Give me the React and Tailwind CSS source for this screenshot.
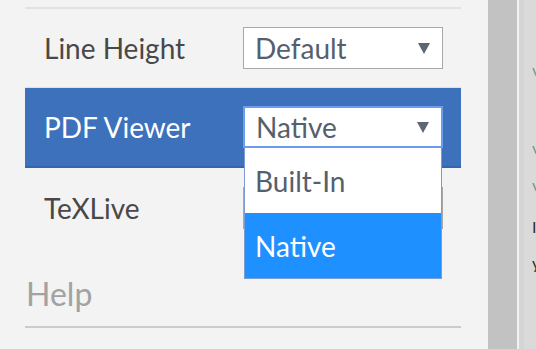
import { useState } from "react";

function Arrow() {
  return (
    <svg width="12" height="11" viewBox="0 0 12 11" className="shrink-0">
      <path d="M0 0 H12 L6 11 Z" fill="#5d6673" />
    </svg>
  );
}

function Select({ value, focused }) {
  return (
    <div
      className={`w-[200px] h-[42px] bg-white flex items-center justify-between pl-[11px] pr-[12px] ${
        focused ? "border-2 border-[#6b9cee] pl-[10px] pr-[11px]" : "border border-[#a8a8a8]"
      }`}
    >
      <span className="text-[28px] leading-none text-[#56606d]">{value}</span>
      <Arrow />
    </div>
  );
}

export default function App() {
  const [current] = useState("Native");
  const options = ["Built-In", "Native"];

  return (
    <div className="w-[536px] h-[349px] flex overflow-hidden font-['Lato','Liberation_Sans',sans-serif]">
      {/* settings panel */}
      <div className="relative w-[488px] bg-[#f3f3f3] pl-[25px] pr-[27px]">
        <div className="mt-[7px] h-[2px] bg-[#e2e2e2]" />

        <div className="h-[78px] flex items-center pl-[19px]">
          <span className="w-[199px] text-[28px] text-[#484848]">Line Height</span>
          <Select value="Default" />
        </div>

        <div className="h-[81px] border-t border-[#e0e0e0] border-b-2 border-b-[#3765ab] bg-[#3e71bb] flex items-center pl-[19px]">
          <span className="w-[199px] text-[28px] text-white">PDF Viewer</span>
          <Select value={current} focused />
        </div>

        <div className="h-[80px] flex items-center pl-[19px]">
          <span className="w-[199px] text-[28px] text-[#484848]">TeXLive</span>
          {/* value hidden behind the open list */}
          <Select value="" />
        </div>

        <div className="h-[78px] flex items-center pl-[1px] pt-[14px]">
          <span className="text-[32px] text-[#a2a2a2]">Help</span>
        </div>

        <div className="h-[2px] bg-[#cccccc]" />

        {/* open dropdown */}
        <div className="absolute left-[244px] top-[148px] w-[198px] border border-t-0 border-[#7c9bd3] bg-white">
          {options.map((o) => (
            <div
              key={o}
              className={`h-[65px] flex items-center pl-[10px] text-[28px] ${
                o === current ? "bg-[#1e90ff] text-white" : "text-[#56606d]"
              }`}
            >
              {o}
            </div>
          ))}
        </div>
      </div>

      {/* scrollbar track */}
      <div className="w-[29px] bg-[#c2c2c2]" />
      <div className="w-[2px] bg-[#f2f2f2]" />
      <div className="w-[5px] bg-[#d5d5d5]" />

      {/* clipped neighbour pane */}
      <div className="flex-1 bg-[#dadada] overflow-hidden pl-[8px] text-[16px] leading-none">
        <div className="mt-[62px] text-[#5e9c9a]">v</div>
        <div className="mt-[62px] text-[#5e9c9a]">v</div>
        <div className="mt-[21px] text-[#5e9c9a]">v</div>
        <div className="mt-[26px] text-[#2e2e2e]">I</div>
        <div className="mt-[20px] text-[#2e2e2e]">y</div>
      </div>
    </div>
  );
}
